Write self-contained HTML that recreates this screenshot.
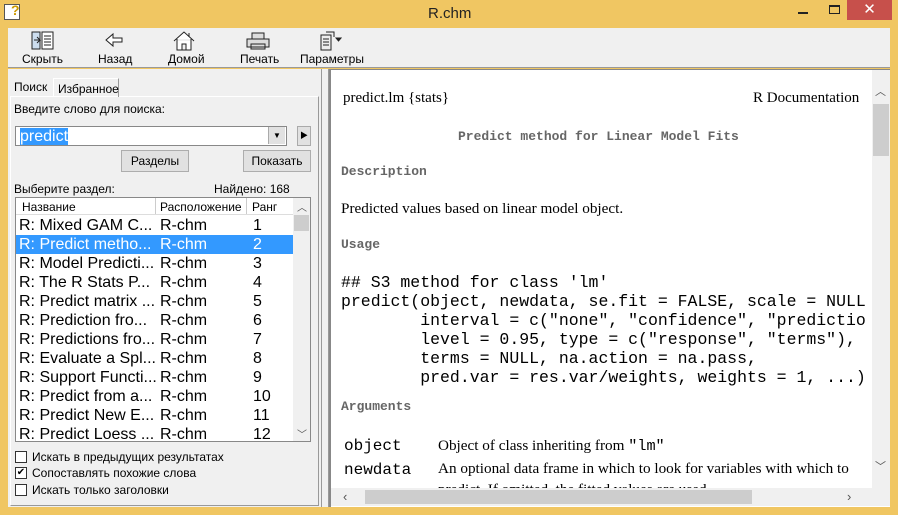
<!DOCTYPE html>
<html><head><meta charset="utf-8"><style>
*{margin:0;padding:0;box-sizing:border-box}
body{width:898px;height:515px;background:#F0C662;position:relative;overflow:hidden;font-family:"Liberation Sans","Noto Sans CJK SC",sans-serif;font-size:12px;color:#000}
.a{position:absolute}
.t{white-space:nowrap}
.mono{font-family:"Liberation Mono",monospace}
.serif{font-family:"Liberation Serif",serif}
.btn{position:absolute;background:#E1E1E1;border:1px solid #ADADAD;text-align:center;line-height:20px}
.row{position:absolute;left:16px;width:277px;height:19px;font-size:16px;line-height:19px}
.row span{position:absolute;top:0}
.cb{position:absolute;left:15px;width:12px;height:12px;border:1px solid #333;background:#fff}
.h{color:#666;font-size:13px;font-weight:bold}
.code{font-size:16.5px;line-height:19px;white-space:pre}
</style></head><body>
<!-- title -->
<div class="a" style="left:4px;top:4px;width:16px;height:16px;border:1px solid #555;background:#fff"></div>
<div class="a" style="left:11px;top:2px;color:#c90;font-weight:bold;font-size:14px">?</div>
<div class="a t" style="left:428px;top:5px;font-size:15px;color:#222">R.chm</div>
<div class="a" style="left:798px;top:12px;width:10px;height:2px;background:#222"></div>
<div class="a" style="left:829px;top:5px;width:11px;height:9px;border:1px solid #222;border-top-width:2px"></div>
<div class="a" style="left:847px;top:0;width:45px;height:20px;background:#C7504B;color:#fff;text-align:center;font-size:15px;line-height:19px">✕</div>
<!-- toolbar -->
<div class="a" style="left:8px;top:28px;width:882px;height:40px;background:#F0F0F0;border-bottom:1px solid #999"></div>
<svg class="a" style="left:30px;top:30px" width="26" height="22" viewBox="0 0 26 22" fill="none" stroke="#222"><rect x="2" y="2" width="8" height="17" fill="#cde"/><rect x="12" y="2" width="11" height="17" fill="#fff"/><path d="M14 6h7M14 9h7M14 12h7M14 15h7M4 10h6l-3-3M10 10l-3 3"/></svg>
<svg class="a" style="left:104px;top:32px" width="20" height="16" viewBox="0 0 20 16" fill="#fff" stroke="#222"><path d="M2 8l7-6v4h9v4H9v4z"/></svg>
<svg class="a" style="left:172px;top:30px" width="24" height="22" viewBox="0 0 24 22" fill="#fff" stroke="#222"><path d="M2 11L12 2l10 9M5 9v11h14V9M10 20v-6h4v6M17 3v4"/></svg>
<svg class="a" style="left:245px;top:31px" width="26" height="20" viewBox="0 0 26 20" fill="#ddd" stroke="#222"><path d="M7 2h12v6H7zM2 8h22v8H2zM6 13h14v5H6z"/></svg>
<svg class="a" style="left:318px;top:30px" width="24" height="22" viewBox="0 0 24 22" fill="#eee" stroke="#222"><path d="M3 5h10v15H3zM8 2h8v5M5 9h6M5 12h6M5 15h6"/><path d="M18 8h5l-2.5 3z" fill="#222"/></svg>
<div class="a t" style="left:22px;top:52px">Скрыть</div>
<div class="a t" style="left:98px;top:52px">Назад</div>
<div class="a t" style="left:168px;top:52px">Домой</div>
<div class="a t" style="left:240px;top:52px">Печать</div>
<div class="a t" style="left:300px;top:52px">Параметры</div>
<!-- left pane -->
<div class="a" style="left:8px;top:69px;width:313px;height:438px;background:#F0F0F0"></div>
<div class="a" style="left:321px;top:69px;width:8px;height:438px;background:#F0F0F0;border-left:1px solid #999;border-right:1px solid #999"></div>
<div class="a" style="left:10px;top:96px;width:309px;height:410px;border:1px solid #999;border-top-color:#fff;border-left-color:#fff"></div>
<div class="a t" style="left:14px;top:80px">Поиск</div>
<div class="a" style="left:53px;top:78px;width:66px;height:19px;border:1px solid #999;border-bottom:none;border-top-color:#fff;border-left-color:#fff"></div>
<div class="a t" style="left:58px;top:82px">Избранное</div>
<div class="a t" style="left:14px;top:102px">Введите слово для поиска:</div>
<div class="a" style="left:15px;top:126px;width:272px;height:20px;background:#fff;border:1px solid #888"></div>
<div class="a t" style="left:20px;top:128px;font-size:16px;background:#3399FF;color:#fff;line-height:17px">predict</div>
<div class="a" style="left:268px;top:127px;width:17px;height:17px;background:#E1E1E1;border-left:1px solid #aaa;font-size:8px;text-align:center;line-height:17px">▼</div>
<div class="a" style="left:297px;top:126px;width:14px;height:20px;background:#E1E1E1;border:1px solid #aaa;font-size:8px;text-align:center;line-height:18px">▶</div>
<div class="btn" style="left:121px;top:150px;width:68px;height:22px">Разделы</div>
<div class="btn" style="left:243px;top:150px;width:68px;height:22px">Показать</div>
<div class="a t" style="left:14px;top:182px">Выберите раздел:</div>
<div class="a t" style="left:214px;top:182px">Найдено: 168</div>
<div class="a" style="left:15px;top:197px;width:296px;height:245px;background:#fff;border:1px solid #888"></div>
<div class="a" style="left:16px;top:198px;width:277px;height:17px;border-bottom:1px solid #ddd"></div>
<div class="a t" style="left:22px;top:200px">Название</div>
<div class="a" style="left:155px;top:198px;width:1px;height:16px;background:#ccc"></div>
<div class="a t" style="left:160px;top:200px">Расположение</div>
<div class="a" style="left:246px;top:198px;width:1px;height:16px;background:#ccc"></div>
<div class="a t" style="left:252px;top:200px">Ранг</div>
<div class="a" style="left:293px;top:198px;width:17px;height:243px;background:#F0F0F0"></div>
<div class="a" style="left:294px;top:215px;width:15px;height:16px;background:#CDCDCD"></div>
<div class="a t" style="left:297px;top:199px;font-size:10px;color:#555">︿</div>
<div class="a t" style="left:297px;top:426px;font-size:10px;color:#555">﹀</div>
<div class="row" style="top:216px"><span style="left:3px">R: Mixed GAM C...</span><span style="left:144px">R-chm</span><span style="left:237px">1</span></div>
<div class="row" style="top:235px;background:#3399FF;color:#fff"><span style="left:3px">R: Predict metho...</span><span style="left:144px">R-chm</span><span style="left:237px">2</span></div>
<div class="row" style="top:254px"><span style="left:3px">R: Model Predicti...</span><span style="left:144px">R-chm</span><span style="left:237px">3</span></div>
<div class="row" style="top:273px"><span style="left:3px">R: The R Stats P...</span><span style="left:144px">R-chm</span><span style="left:237px">4</span></div>
<div class="row" style="top:292px"><span style="left:3px">R: Predict matrix ...</span><span style="left:144px">R-chm</span><span style="left:237px">5</span></div>
<div class="row" style="top:311px"><span style="left:3px">R: Prediction fro...</span><span style="left:144px">R-chm</span><span style="left:237px">6</span></div>
<div class="row" style="top:330px"><span style="left:3px">R: Predictions fro...</span><span style="left:144px">R-chm</span><span style="left:237px">7</span></div>
<div class="row" style="top:349px"><span style="left:3px">R: Evaluate a Spl...</span><span style="left:144px">R-chm</span><span style="left:237px">8</span></div>
<div class="row" style="top:368px"><span style="left:3px">R: Support Functi...</span><span style="left:144px">R-chm</span><span style="left:237px">9</span></div>
<div class="row" style="top:387px"><span style="left:3px">R: Predict from a...</span><span style="left:144px">R-chm</span><span style="left:237px">10</span></div>
<div class="row" style="top:406px"><span style="left:3px">R: Predict New E...</span><span style="left:144px">R-chm</span><span style="left:237px">11</span></div>
<div class="row" style="top:425px;height:17px;overflow:hidden"><span style="left:3px">R: Predict Loess ...</span><span style="left:144px">R-chm</span><span style="left:237px">12</span></div>
<div class="cb" style="top:451px"></div><div class="a t" style="left:32px;top:450px">Искать в предыдущих результатах</div>
<div class="cb" style="top:467px;font-size:10px;line-height:10px;text-align:center">✔</div><div class="a t" style="left:32px;top:466px">Сопоставлять похожие слова</div>
<div class="cb" style="top:484px"></div><div class="a t" style="left:32px;top:483px">Искать только заголовки</div>
<!-- right pane -->
<div class="a" style="left:329px;top:69px;width:561px;height:438px;background:#fff;border-left:2px solid #888;border-top:1px solid #888"></div>
<div class="a" style="left:872px;top:70px;width:18px;height:418px;background:#F0F0F0"></div>
<div class="a" style="left:873px;top:104px;width:16px;height:52px;background:#CDCDCD"></div>
<div class="a t" style="left:875px;top:83px;font-size:11px;color:#555">︿</div>
<div class="a t" style="left:875px;top:458px;font-size:11px;color:#555">﹀</div>
<div class="a" style="left:331px;top:488px;width:559px;height:18px;background:#F0F0F0"></div>
<div class="a" style="left:365px;top:490px;width:387px;height:14px;background:#CDCDCD"></div>
<div class="a t" style="left:343px;top:489px;font-size:13px;color:#555">‹</div>
<div class="a t" style="left:847px;top:489px;font-size:13px;color:#555">›</div>
<div class="a t serif" style="left:343px;top:90px;font-size:15px">predict.lm {stats}</div>
<div class="a t serif" style="left:753px;top:90px;font-size:15px">R Documentation</div>
<div class="a t mono h" style="left:458px;top:129px">Predict method for Linear Model Fits</div>
<div class="a t mono h" style="left:341px;top:164px">Description</div>
<div class="a t serif" style="left:341px;top:200px;font-size:15.2px">Predicted values based on linear model object.</div>
<div class="a t mono h" style="left:341px;top:237px">Usage</div>
<div class="a mono code" style="left:341px;top:273px;width:531px;overflow:hidden">## S3 method for class 'lm'
predict(object, newdata, se.fit = FALSE, scale = NULL
        interval = c("none", "confidence", "predictio
        level = 0.95, type = c("response", "terms"),
        terms = NULL, na.action = na.pass,
        pred.var = res.var/weights, weights = 1, ...)</div>
<div class="a t mono h" style="left:341px;top:399px">Arguments</div>
<div class="a t mono" style="left:344px;top:437px;font-size:16px">object</div>
<div class="a t serif" style="left:438px;top:437px;font-size:15.2px">Object of class inheriting from <span class="mono">"lm"</span></div>
<div class="a t mono" style="left:344px;top:461px;font-size:16px">newdata</div>
<div class="a t serif" style="left:438px;top:460px;font-size:15.2px">An optional data frame in which to look for variables with which to</div>
<div class="a" style="left:438px;top:480px;width:430px;height:8px;overflow:hidden"><div class="t serif" style="font-size:15.2px;line-height:19px">predict. If omitted, the fitted values are used.</div></div>
</body></html>
